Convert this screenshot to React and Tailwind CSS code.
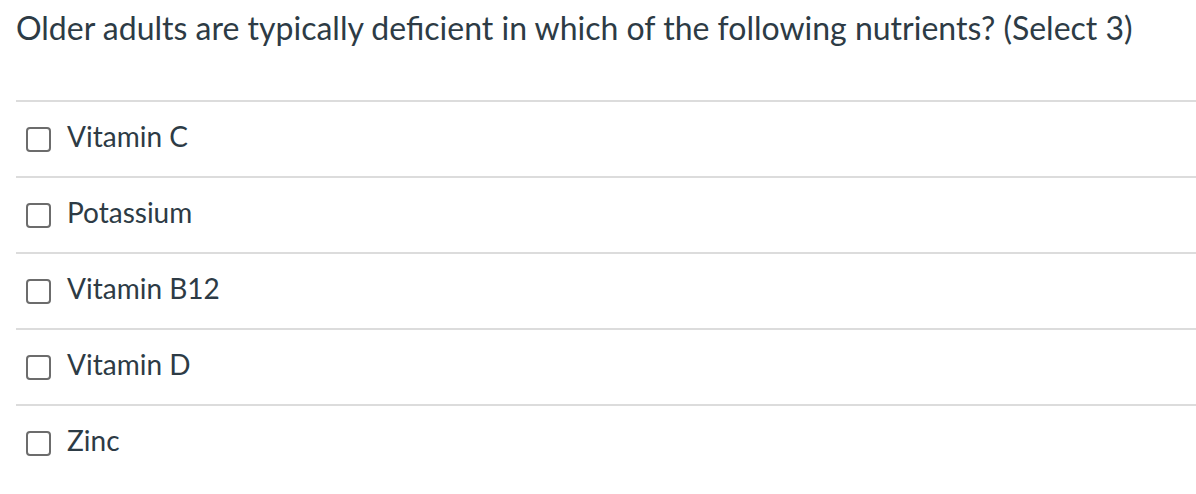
export default function App() {
  const options = ["Vitamin C", "Potassium", "Vitamin B12", "Vitamin D", "Zinc"];
  return (
    <div className="w-[1196px] h-[494px] bg-white pl-4 text-[#2d3b45] font-['Lato',sans-serif] overflow-hidden">
      <div className="h-[100px] pt-[8px] text-[32px] leading-[40px]">
        Older adults are typically deficient in which of the following nutrients? (Select 3)
      </div>
      {options.map((o) => (
        <div key={o} className="h-[76px] border-t-2 border-[#dcdcdc] flex items-center pl-[10px]">
          <span className="w-[25px] h-[25px] rounded-[4px] border-2 border-[#6c6c6c] shrink-0" />
          <span className="ml-4 text-[28px] leading-[34px] -mt-[6px]">{o}</span>
        </div>
      ))}
    </div>
  );
}
